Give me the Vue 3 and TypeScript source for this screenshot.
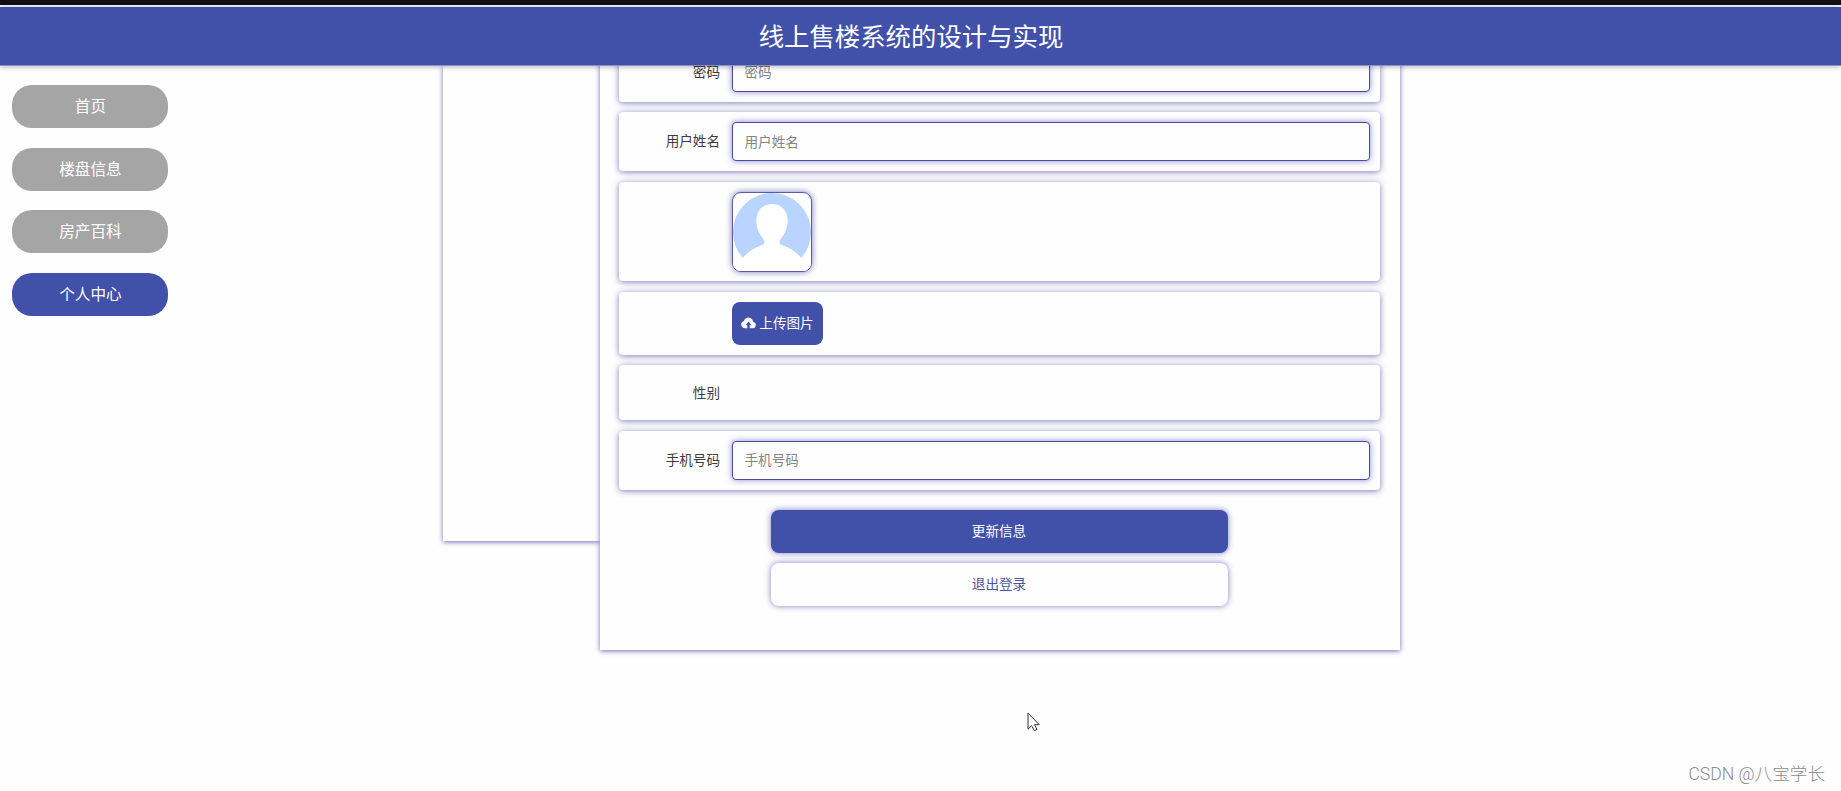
<script setup lang="ts">
interface NavItem {
  label: string
  active: boolean
}

const title = '线上售楼系统的设计与实现'

const nav: NavItem[] = [
  { label: '首页', active: false },
  { label: '楼盘信息', active: false },
  { label: '房产百科', active: false },
  { label: '个人中心', active: true },
]
</script>

<template>
  <div class="page">
    <div class="strip"></div>
    <header class="header">{{ title }}</header>

    <div class="body">
      <nav class="sidebar">
        <a v-for="item in nav" :key="item.label" class="nav-item" :class="{ active: item.active }">{{ item.label }}</a>
      </nav>

      <main class="content">
        <aside class="side-panel"></aside>
        <form class="card" @submit.prevent>
          <div class="row">
            <label class="label">密码</label>
            <input class="input" type="text" placeholder="密码" />
          </div>
          <div class="row">
            <label class="label">用户姓名</label>
            <input class="input" type="text" placeholder="用户姓名" />
          </div>
          <div class="row row-avatar">
            <span class="label"></span>
            <div class="avatar">
              <svg viewBox="0 0 78 78" width="78" height="78">
                <circle cx="39" cy="39" r="39" fill="#b8d4ff" />
                <path
                  fill="#fff"
                  d="M39 11c-10 0-15.7 7.500-15.700 17 0 7.500 3.200 13 6.700 17.500 2.500 3.200 1.700 5.500-1 6.500C20 55 13.500 59.500 9.500 65.500V78h59V65.500C64.500 59.500 58 55 49 52c-2.700-1-3.500-3.300-1-6.500 3.500-4.500 6.700-10 6.700-17.500 0-9.500-5.700-17-15.700-17z"
                />
                <path fill="#fff" d="M0 65.500h78V78H0z" />
              </svg>
            </div>
          </div>
          <div class="row row-upload">
            <span class="label"></span>
            <button class="upload" type="button">
              <svg class="cloud" viewBox="0 0 15 12" width="15" height="12">
                <path
                  fill="#fff"
                  d="M12.100 4.700C11.800 2.200 9.900.5 7.500.5 5.300.5 3.500 1.900 3 4 1.200 4.400.2 5.900.2 7.600c0 2 1.600 3.700 3.600 3.700h2.500V8.300H4.500l3-3.700 3 3.700H8.700v3h2.600c2 0 3.500-1.500 3.500-3.400 0-1.500-1-2.900-2.700-3.200z"
                />
              </svg>
              <span>上传图片</span>
            </button>
          </div>
          <div class="row row-gender">
            <label class="label">性别</label>
          </div>
          <div class="row">
            <label class="label">手机号码</label>
            <input class="input" type="text" placeholder="手机号码" />
          </div>
          <div class="actions">
            <button class="action primary" type="submit">更新信息</button>
            <button class="action" type="button">退出登录</button>
          </div>
        </form>
      </main>
    </div>

    <svg class="cursor" viewBox="0 0 14 20" width="14" height="20">
      <path d="M1 1v16.200l3.700-3.500 2.700 5 2.600-1.300-2.500-4.700H12.200z" fill="#fff" stroke="#333" stroke-width="1" />
    </svg>
    <div class="watermark">CSDN @八宝学长</div>
  </div>
</template>

<style>
body {
  margin: 0;
  background: #fefefe;
}
</style>

<style scoped>
.page {
  position: relative;
  display: flex;
  flex-direction: column;
  width: 1841px;
  height: 791px;
  overflow: hidden;
  background: #fefefe;
  font-family: "Noto Sans CJK SC", "Liberation Sans", sans-serif;
  font-size: 13.600px;
  color: #3c3c3c;
}

.page * {
  box-sizing: border-box;
}

.strip {
  flex: none;
  height: 7px;
  background: #101010;
  border-bottom: 2px solid #f4f4fa;
}

.header {
  position: relative;
  z-index: 2;
  flex: none;
  height: 59px;
  padding-right: 19px;
  border-bottom: 1px solid #8a93c8;
  background: #4150a9;
  box-shadow: 0 1px 5px rgba(0, 0, 0, 0.28);
  color: #fff;
  font-size: 25.400px;
  line-height: 57px;
  text-align: center;
}

.body {
  display: flex;
  flex: 1;
  min-height: 0;
  overflow: hidden;
}

.sidebar {
  display: flex;
  flex: none;
  flex-direction: column;
  gap: 19.500px;
  width: 443px;
  padding: 19px 0 0 12.400px;
}

.nav-item {
  width: 156px;
  height: 43px;
  border-radius: 20px;
  background: #a5a5a5;
  color: #fff;
  font-size: 15.600px;
  line-height: 41px;
  text-align: center;
}

.nav-item.active {
  background: #4150a9;
}

.content {
  display: flex;
  align-items: flex-start;
  width: 957px;
}

.side-panel,
.card {
  background: #fefefe;
  box-shadow: 0 1px 5px rgba(63, 60, 160, 0.75);
}

.side-panel {
  width: 157px;
  height: 475px;
}

.card {
  position: relative;
  display: flex;
  flex-direction: column;
  gap: 10.500px;
  width: 800px;
  height: 607.500px;
  margin-top: -23.500px;
  padding: 0 20px 0 19px;
}

.row {
  display: flex;
  flex: none;
  gap: 12px;
  height: 59.200px;
  padding: 10px;
  border-radius: 4px;
  background: #fefefe;
  box-shadow: 0 1px 6px rgba(63, 60, 160, 0.68);
}

.row-avatar {
  height: 99.600px;
}

.row-upload {
  height: 62.700px;
}

.row-gender {
  height: 55px;
}

.label {
  width: 91px;
  line-height: 37px;
  text-align: right;
}

.row-gender .label {
  line-height: 34px;
}

.input {
  width: 638px;
  height: 39px;
  padding: 0 12px 2px 11.500px;
  border: 1px solid #4a4c9e;
  border-radius: 4px;
  outline: none;
  background: #fefefe;
  box-shadow: 0 0 6px rgba(63, 60, 190, 0.6);
  color: #333;
  font: inherit;
}

.input::placeholder {
  color: #848484;
  opacity: 1;
}

.avatar {
  width: 80px;
  height: 80px;
  overflow: hidden;
  border: 1px solid #5c5ca6;
  border-radius: 9px;
  background: #fff;
  box-shadow: 0 0 6px rgba(63, 60, 160, 0.7);
}

.avatar svg {
  display: block;
}

.upload {
  display: flex;
  align-items: center;
  justify-content: center;
  gap: 3px;
  width: 91px;
  height: 43px;
  padding: 0 0 2px;
  border: 0;
  border-radius: 8px;
  background: #4150a9;
  color: #fff;
  font: inherit;
}

.cloud {
  flex: none;
  margin-top: 2px;
}

.actions {
  display: flex;
  flex-direction: column;
  align-items: center;
  gap: 10px;
  padding-top: 9.200px;
}

.action {
  width: 457px;
  height: 43px;
  padding: 0 1px 2px 0;
  border: 0;
  border-radius: 8px;
  background: #fefefe;
  box-shadow: 0 0 6px rgba(63, 60, 160, 0.65);
  color: #4c559f;
  font: inherit;
}

.action.primary {
  background: #4150a9;
  color: #fff;
}

.cursor {
  position: absolute;
  top: 712px;
  left: 1027px;
}

.watermark {
  position: absolute;
  right: 16px;
  bottom: 4px;
  color: #8c8c8c;
  font-family: Roboto, "Noto Sans CJK SC", sans-serif;
  font-size: 17.600px;
  font-weight: 300;
  line-height: 26px;
  white-space: nowrap;
}
</style>
